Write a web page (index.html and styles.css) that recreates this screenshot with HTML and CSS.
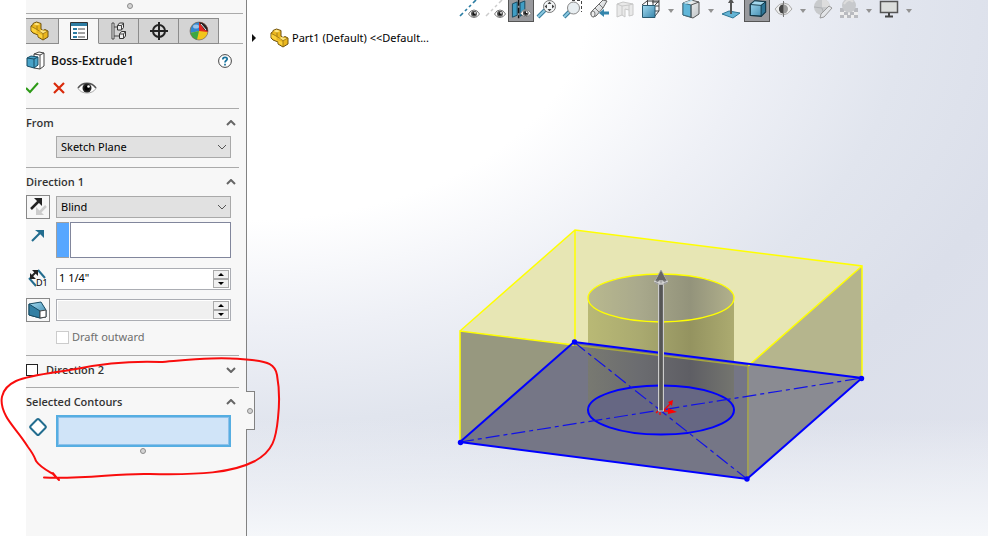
FILE: index.html
```
<!DOCTYPE html>
<html lang="en">
<head>
<meta charset="utf-8">
<title>Part1 - Boss-Extrude1</title>
<link rel="stylesheet" href="styles.css">
</head>
<body>
<svg class="defs" aria-hidden="true">
  <defs>
    <linearGradient id="gBlue" x1="0" y1="0" x2="1" y2="1"><stop offset="0" stop-color="#a5dcf2"/><stop offset="1" stop-color="#3784aa"/></linearGradient>
    <linearGradient id="gGray" x1="0" y1="0" x2="1" y2="1"><stop offset="0" stop-color="#fff"/><stop offset="1" stop-color="#bfc3c6"/></linearGradient>
    <linearGradient id="gCyl"><stop offset="0" stop-color="#b9b975"/><stop offset=".35" stop-color="#aaaa70"/><stop offset=".7" stop-color="#949360"/><stop offset="1" stop-color="#acab70"/></linearGradient>
    <linearGradient id="gCap"><stop offset="0" stop-color="#b9b98e"/><stop offset=".35" stop-color="#a9a98c"/><stop offset=".7" stop-color="#93937b"/><stop offset="1" stop-color="#b2b18c"/></linearGradient>
    <linearGradient id="gLow"><stop offset="0" stop-color="#787971"/><stop offset=".35" stop-color="#6b6c70"/><stop offset=".7" stop-color="#5e5e64"/><stop offset="1" stop-color="#74756f"/></linearGradient>
    <linearGradient id="gRod"><stop offset="0" stop-color="#777"/><stop offset=".5" stop-color="#4d4d4d"/><stop offset="1" stop-color="#777"/></linearGradient>
    <symbol id="eye" viewBox="0 0 20 12">
      <path d="M1 6.500Q4 2 10 2t9 4.500Q16 11 10 11T1 6.500Z" fill="#fff" stroke="#aaa" stroke-width="1"/>
      <path d="M1 6Q4 1.200 10 1.200T19 6" fill="none" stroke="#555" stroke-width="1.500"/>
      <circle cx="10" cy="6" r="4.500" fill="#222"/><circle cx="10" cy="6" r="2.600" fill="#000"/><circle cx="11.500" cy="4.500" r="1.300" fill="#fff"/>
    </symbol>
    <symbol id="eyeSmall" viewBox="0 0 12 9">
      <path d="M.5 5Q2.500 1 6 1t5.500 4Q9.500 8.500 6 8.500T.5 5Z" fill="#fff" stroke="#777"/>
      <circle cx="6" cy="4.700" r="3" fill="#555"/><circle cx="6" cy="4.700" r="1.500" fill="#111"/><circle cx="7" cy="3.800" r=".9" fill="#fff"/>
    </symbol>
    <symbol id="part" viewBox="0 0 20 20">
      <path d="m2 5 2-1.500V2.500L7.500 1 12 2.500V8l2 1.500L16 8.500l3 1.500v6l-5 3-5-3v-2L4 12 2 10Z" fill="#eab61e" stroke="#6f5310" stroke-linejoin="round"/>
      <path d="m4.500 3 3-1.300L11 3 8 4.500ZM9.500 10.500l3-1.500 5.500 1.500-4 2.200Z" fill="#ffe680"/>
      <path d="m2.500 6 5 2v4l6.500 2v4l-4.500-2.500v-2L4.500 11l-2-1.500Z" fill="#fbd23c"/>
      <path d="M8 4.500V8.500l6 4.200V18M2.500 5.500 8 8.500M14 12.700l4.500-2.500" fill="none" stroke="#94700f" stroke-width=".8"/>
    </symbol>
    <symbol id="chev" viewBox="0 0 10 6"><path d="m1 1 4 4 4-4" fill="none" stroke="currentColor"/></symbol>
    <symbol id="cube" viewBox="0 0 20 20">
      <path d="m2 6 5-4 12 1v11l-5 5-12-1Z" fill="url(#gBlue)" stroke="#123646" stroke-width="1.500" stroke-linejoin="round"/>
      <path d="m2 6 5-4 12 1-5 4Z" fill="#a4d8ed" stroke="#123646"/><path d="m14 7 5-4v11l-5 5Z" fill="#2d7596" stroke="#123646"/>
    </symbol>
    <symbol id="caret" viewBox="0 0 6 4"><path d="M0 0h6L3 4Z" fill="#929292"/></symbol>
  </defs>
</svg>

<main class="app">
  <aside class="panel">
    <div class="grip"><span class="dot"></span></div>
    <nav class="tabs" aria-label="Managers">
      <button class="tab tab-first" aria-label="Feature tree"><svg width="20" height="20"><use href="#part"/></svg></button>
      <button class="tab active" aria-label="Properties"><svg width="18" height="18" viewBox="0 0 18 18"><path d="M.5.500h17v17H.500z" fill="#fff" stroke="#333"/><path d="M1 1h16v3H1z" fill="#2e7da3"/><path d="M3 6h4v2H3zM3 10h4v2H3zM3 14h4v2H3z" fill="#2e7da3"/><path d="M8 7h7M8 11h7M8 15h7" stroke="#444"/></svg></button>
      <button class="tab" aria-label="Configurations"><svg width="16" height="18" viewBox="0 0 16 18"><path d="M1 1h2v16H1zM3 5h4M3 14h5" fill="#fff" stroke="#444"/><path d="M6.500 3.500 8.500 1h4v4.500l-2 2.500h-4ZM8.500 12l2-2.500h4V14l-2 2.500h-4Z" fill="#eee" stroke="#333"/><path d="M6.500 3.500h4V8M8.500 12h4v4.500M10.500 3.500l2-2.500M12.500 12l2-2.500" fill="none" stroke="#444"/></svg></button>
      <button class="tab" aria-label="Dimensions"><svg width="20" height="20" viewBox="0 0 20 20"><circle cx="10" cy="10" r="6" fill="none" stroke="#222" stroke-width="2"/><path d="M10 1v18M1 10h18" stroke="#222" stroke-width="2"/></svg></button>
      <button class="tab" aria-label="Display"><svg width="20" height="20" viewBox="0 0 20 20"><circle cx="10" cy="10" r="9" fill="#f2c51c"/><path d="M10 10V1a9 9 0 0 0-8.500 11Z" fill="#3286d0"/><path d="M10 10 1.500 12A9 9 0 0 0 8 18.800Z" fill="#3da844"/><path d="M10 10V1a9 9 0 0 1 8.900 10Z" fill="#e12722"/><path d="m10 1 2 .2a9 9 0 0 1 7 9l-4-2Z" fill="#222"/><path d="m12 3 5 6" stroke="#eee"/><ellipse cx="7" cy="5.500" rx="3" ry="2" fill="#fff" fill-opacity=".5"/><circle cx="10" cy="10" r="9" fill="none" stroke="#655" stroke-opacity=".6"/></svg></button>
    </nav>

    <header class="feature">
      <svg width="20" height="20" viewBox="0 0 20 20"><path d="m8 3 5-2 5 1v13l-4 3-6-1Z" fill="#fff" stroke="#444"/><path d="M14 4v14M8 3l6 1 4-2" fill="none" stroke="#444"/><path d="m1 7 4-2 7 1v8l-4 3-7-2Z" fill="#49a3c8" stroke="#174b63"/><path d="m1 7 7 1v9M8 8l4-2" fill="none" stroke="#174b63"/></svg>
      <h1>Boss-Extrude1</h1>
      <button class="bare" aria-label="Help"><svg width="14" height="14" viewBox="0 0 14 14"><circle cx="7" cy="7" r="6.400" fill="#fff" stroke="#444"/><path d="M4.800 5.500C4.800 2.500 9.400 2.700 9.200 5.200 9 6.600 7 6.600 7 8.500M7 9.800v1.600" fill="none" stroke="#16719c" stroke-width="1.700"/></svg></button>
    </header>
    <div class="actions">
      <button class="bare" aria-label="OK"><svg width="13" height="12" viewBox="0 0 13 12"><path d="m0 6 4 4 8-9" fill="none" stroke="#2c9a16" stroke-width="2"/></svg></button>
      <button class="bare" aria-label="Cancel"><svg width="12" height="12" viewBox="0 0 12 12"><path d="m1 1 10 10M11 1 1 11" stroke="#d92a0b" stroke-width="2.200"/></svg></button>
      <button class="bare" aria-label="Preview"><svg width="20" height="12"><use href="#eye"/></svg></button>
    </div>

    <section class="group">
      <h2>From <svg class="fold up"><use href="#chev"/></svg></h2>
      <div class="row">
        <div class="combo field"><select aria-label="Start condition"><option>Sketch Plane</option></select><svg><use href="#chev"/></svg></div>
      </div>
    </section>

    <section class="group direction">
      <h2>Direction 1 <svg class="fold up"><use href="#chev"/></svg></h2>
      <div class="row">
        <button class="tool" aria-label="Reverse direction"><svg width="20" height="20" viewBox="0 0 20 20"><path d="m18 9-6 6" stroke="#ccc" stroke-width="2.500"/><path d="M8 10v8h8l-3-3-2-2Z" fill="#ccc"/><path d="m3 12 8-8" stroke="#222" stroke-width="2.500"/><path d="M6 1h8v8l-3-3-2-2Z" fill="#222"/></svg></button>
        <div class="combo field"><select aria-label="End condition"><option>Blind</option></select><svg><use href="#chev"/></svg></div>
      </div>
      <div class="row">
        <svg class="mark arrow" width="14" height="14" viewBox="0 0 14 14"><path d="m1 13 9-9" stroke="#236d8f" stroke-width="2.200"/><path d="M4 2h9v8l-3-3-2-2Z" fill="#236d8f"/></svg>
        <div class="picker field"><span class="swatch"></span><input aria-label="Direction of extrusion"></div>
      </div>
      <div class="row depth">
        <svg class="mark" width="22" height="20" viewBox="0 0 22 20"><path d="m1 9 7 8M10 1l7 8" stroke="#236d8f" stroke-width="2"/><path d="m3 8 6-6" stroke="#222" stroke-width="2"/><path d="M2 4v6h6zM4 1h6v6z" fill="#222"/><text x="8" y="17" font-size="9">D1</text></svg>
        <div class="spin field"><input aria-label="Depth" value='1 1/4"'><span class="steps"><button aria-label="Increase"><svg viewBox="0 0 6 3"><path d="m3 0 3 3H0z"/></svg></button><button aria-label="Decrease"><svg viewBox="0 0 6 3"><path d="M0 0h6L3 3z"/></svg></button></span></div>
      </div>
      <div class="row draft">
        <button class="tool" aria-label="Draft"><svg width="20" height="18" viewBox="0 0 20 18"><path d="m1 3 12-2 5 8v7l-6 1-11-3Z" fill="url(#gBlue)" stroke="#174b63"/><path d="m1 3 11 7v7L1 14Z" fill="#327fa3" stroke="#174b63"/><path d="m12 10 6-1v7l-6 1Z" fill="#fff" stroke="#444"/></svg></button>
        <div class="spin off field"><input aria-label="Draft angle" disabled><span class="steps"><button aria-label="Increase"><svg viewBox="0 0 6 3"><path d="m3 0 3 3H0z"/></svg></button><button aria-label="Decrease"><svg viewBox="0 0 6 3"><path d="M0 0h6L3 3z"/></svg></button></span></div>
      </div>
      <label class="outward"><input type="checkbox" disabled>Draft outward</label>
    </section>

    <section class="group second">
      <h2><label><input type="checkbox">Direction 2</label> <svg class="fold"><use href="#chev"/></svg></h2>
    </section>

    <section class="group">
      <h2>Selected Contours <svg class="fold up"><use href="#chev"/></svg></h2>
      <div class="row">
        <svg class="mark contour" width="20" height="20" viewBox="0 0 20 20"><rect x="4" y="4" width="12" height="12" rx="1.500" transform="rotate(45 10 10)" fill="#fff" stroke="#236d8f" stroke-width="2"/></svg>
        <input class="contours field" aria-label="Selected contours">
      </div>
      <div class="resize"><span class="dot"></span></div>
    </section>
    <button class="handle" aria-label="Collapse panel"><span class="dot"></span></button>
  </aside>

  <section class="viewport">
    <svg class="scene" viewBox="247 0 741 536" role="img" aria-label="Extrude preview">
      <path d="m460 331 115-101 287 36v112L747 479 460 442Z" fill="#e7e6b4"/>
      <path d="m748 366 114-100v112L747 479Z" fill="#b5b58d"/>
      <path d="m460 331 288 35-1 113-287-37Z" fill="#97987f"/>
      <path d="m588 298h146v66l-146-19Z" fill="url(#gCyl)"/>
      <ellipse cx="661" cy="298" rx="73" ry="24" fill="url(#gCap)"/>
      <path d="m574 342 174 22-1 115-287-37Z" fill="#757686"/>
      <path d="m748 364 114 14-115 101Z" fill="#8a8b92"/>
      <path d="m588 345 146 19v46H588Z" fill="url(#gLow)"/>
      <path d="M460 331 575 230l287 36v112M862 266 748 366M575 230v112M460 442V331l114 14" fill="none" stroke="#ff0" stroke-width="1.500"/>
      <path d="m574 345 174 21v113" fill="none" stroke="#aaa83d" stroke-width="1.300"/>
      <ellipse cx="661" cy="298" rx="73" ry="24" fill="none" stroke="#ff0" stroke-width="1.300"/>
      <ellipse cx="661" cy="410" rx="73" ry="24.500" fill="#666783" stroke="#00f" stroke-width="2"/>
      <path d="M460 442 862 378M574 342l173 137" fill="none" stroke="#1111e8" stroke-width="1.200" stroke-dasharray="14 4 4 4"/>
      <path d="m574 342 288 36-115 101-287-37Z" fill="none" stroke="#00f" stroke-width="2"/>
      <g fill="#00f"><circle cx="574.500" cy="342" r="2.700"/><circle cx="861.500" cy="378.500" r="2.700"/><circle cx="747" cy="479" r="2.700"/><circle cx="460.500" cy="442.500" r="2.700"/></g>
      <path d="m663 411 8-8m-7 8h9m-15 0-2 2m4-1v3" stroke="red" stroke-width="1.300"/><path d="m673 400-1 6-4-4ZM668 408l9 4-9 2Z" fill="red"/>
      <path d="M658.500 282h5v129h-5Z" fill="url(#gRod)" stroke="#ccc"/>
      <path d="m661 270 6 11q1 3-4 3h-4q-5 0-4-3Z" fill="#777" stroke="#aaa"/><path d="m661 271 5 9h-10Z" fill="#666"/><path d="M654 281q7 4 14 0M659 281h4v3h-4z" fill="#888" stroke="#ddd"/>
    </svg>

    <div class="toolbar" role="toolbar" aria-label="View">
      <button aria-label="View sketch lines"><svg viewBox="0 0 26 22"><path d="m4 16 3-3m2-2 2-2m2-2 2-2m2-2 3-3" stroke="#2b7da3" stroke-width="1.700"/><svg x="12" y="9" width="12" height="9"><use href="#eyeSmall"/></svg></svg></button>
      <button aria-label="View axes"><svg viewBox="0 0 26 22"><path d="m4 16 3-3m2-2 2-2m2-2 2-2m2-2 3-3" stroke="#ccc" stroke-width="1.500"/><svg x="12" y="9" width="12" height="9"><use href="#eyeSmall"/></svg></svg></button>
      <button class="on" aria-label="View planes"><svg viewBox="0 0 26 22"><path d="m4 4 5-2v14l-5 2ZM12 3l5-2v13l-5 3Z" fill="#3f9dc4" stroke="#174b63"/><path d="M10.500 0v19" stroke="#111" stroke-width="1.500" stroke-dasharray="6 2"/><svg x="12" y="9" width="12" height="9"><use href="#eyeSmall"/></svg></svg></button>
      <button aria-label="Zoom to fit"><svg viewBox="0 0 26 22"><path d="m4 17 7-7" stroke="#387e9e" stroke-width="4"/><path d="m4 17 7-7" stroke="#8bc8e0" stroke-width="2"/><circle cx="15.500" cy="6.500" r="6" fill="#f4f6f7" stroke="#777"/><path d="m15.500 1.500 2 2.500h-4zM15.500 11.500l2-2.500h-4zM10.500 6.500 13 4.500v4zM20.500 6.500 18 4.500v4z" fill="#444"/></svg></button>
      <button aria-label="Zoom to area"><svg viewBox="0 0 26 22"><path d="M12 .500h9.500V12" fill="none" stroke="#444" stroke-dasharray="3 2"/><path d="m4 17 6-6" stroke="#387e9e" stroke-width="4"/><path d="m4 17 6-6" stroke="#8bc8e0" stroke-width="2"/><circle cx="13.500" cy="8" r="6" fill="#e8eef1" stroke="#888"/></svg></button>
      <button aria-label="Previous view"><svg viewBox="0 0 26 22"><path d="m5 12 5-5 7-7 4 1-4 7-7 8-3 1-2-2Z" fill="url(#gGray)" stroke="#666"/><path d="m9 8 4 4m0-8 4 4" stroke="#777"/><ellipse cx="7" cy="14" rx="2" ry="3" fill="#eee" stroke="#777"/><path d="m13 13 5-4v2.500h5v3h-5V17Z" fill="#3485ac"/></svg></button>
      <button aria-label="Section view"><svg viewBox="0 0 26 22"><path d="m5 4 6-2 10 2v11l-4 1v-6l-4-1v8l-3-2-5 2Z" fill="#e9e9e9" stroke="#c8c8c8"/><path d="m5 4 5 2 7-1 4-1M10 6v9M17 5v5" fill="none" stroke="#c8c8c8"/></svg></button>
      <button aria-label="View orientation"><svg viewBox="0 0 26 22"><path d="M9.500 0v11H21V0M4 5l5-4h12l-4 4M17 16l4-5M4 16l5-5M15 0v5m-1-3h7m-4 4h4" fill="none" stroke="#444"/><path d="M4.500 5.500H17v12H4.500Z" fill="url(#gBlue)" stroke="#285970"/></svg></button>
      <button class="drop" aria-label="View orientation options"><svg><use href="#caret"/></svg></button>
      <button aria-label="Display style"><svg viewBox="0 0 26 22"><path d="m5 3 8-3 8 2v12l-6 4-10-3Z" fill="url(#gGray)" stroke="#555"/><path d="m5 3 8 2v12l-8-2Z" fill="#60b6d9" stroke="#396f85"/><path d="m13 5 8-3M13 5v13" stroke="#555"/><path d="m5 3 8-3 2 .5L8 4Z" fill="#b7dfee"/></svg></button>
      <button class="drop" aria-label="Display style options"><svg><use href="#caret"/></svg></button>
      <button aria-label="Normal to"><svg viewBox="0 0 26 22"><path d="m4 14 7-3 11 2-7 5Z" fill="#65b4d5" stroke="#2d7695"/><path d="M13 1v13" stroke="#555" stroke-width="2"/><path d="m13-2 3 5h-6z" fill="#555"/></svg></button>
      <button class="on" aria-label="Shaded with edges"><svg viewBox="0 0 26 22"><svg x="4" y="-1" width="19" height="19" viewBox="0 0 20 20"><use href="#cube"/></svg></svg></button>
      <button aria-label="Hide or show items"><svg viewBox="0 0 26 22"><path d="M5 9q4-6 9-6t8 6q-4 6-9 6T5 9Z" fill="#eee" stroke="#aaa"/><circle cx="13.500" cy="9" r="4.500" fill="#999"/><path d="M13.500 4.500a4.500 4.500 0 0 0 0 9Z" fill="#444"/><path d="M13.500 1v16" stroke="#777"/></svg></button>
      <button class="drop" aria-label="Hide or show options"><svg><use href="#caret"/></svg></button>
      <button aria-label="Edit appearance"><svg viewBox="0 0 26 22"><circle cx="12" cy="7" r="8" fill="#c8cacc"/><path d="M12 7V-1a8 8 0 0 1 8 8Z" fill="#ddd"/><path d="m4 7 8 1 2 7" fill="none" stroke="#b0b2b5"/><path d="m11 14 8-8 3 2-8 9-4 1Z" fill="#e3e5e8" stroke="#999"/></svg></button>
      <button aria-label="Apply scene"><svg viewBox="0 0 26 22"><path d="M4 8h18v10H4Z" fill="#eee"/><path d="M4 8h4v4H4zM8 12h4v3H8zM4 15h4v3H4zM18 8h4v4h-4zM14 12h4v3h-4zM11 15h4v3h-4zM18 15h4v3h-4z" fill="#b9bbc0"/><circle cx="13" cy="5.500" r="7" fill="#c7c9cc"/><path d="M8 4q5-7 9-2" stroke="#ddd" fill="none" stroke-width="2"/></svg></button>
      <button class="drop" aria-label="Scene options"><svg><use href="#caret"/></svg></button>
      <button aria-label="View settings"><svg viewBox="0 0 26 22"><path d="M4.500 1.500h17v11h-17z" fill="#dcdedc" stroke="#555" stroke-width="1.500"/><path d="M13 13v3M9 16.500h8" stroke="#444" stroke-width="2"/></svg></button>
      <button class="drop" aria-label="View setting options"><svg><use href="#caret"/></svg></button>
    </div>
    <div class="tree">
      <svg width="4" height="8" viewBox="0 0 4 8"><path d="M0 0v8l4-4z" fill="#111"/></svg>
      <svg width="20" height="20"><use href="#part"/></svg>
      <span>Part1 (Default) &lt;&lt;Default...</span>
    </div>
  </section>
</main>

<svg class="ink" viewBox="0 0 290 140" aria-hidden="true"><path d="M44 127.500C90 129 115 123 150 124c50 1 82-1 105-13 18-10 21-22 23-43 2-18 1-32-1-43-2-11-9-13-25-15-33-4-65 0-92 2-28-1-55 1-84 7-24 4-47 6-60 12C-1 39-1 53 6 66c4 8 14 18 22 31 6 8 6 9 8 14 4 6 12 10 17 13l6 6M53 123l4 5"/></svg>
</body>
</html>
```
FILE: styles.css
```
* { box-sizing: border-box; }

body {
  margin: 0;
  background: #fff;
  color: #000;
  font: 11px/16px "Noto Sans", "Open Sans", sans-serif;
}

svg { display: block; flex: none; }
button, input, select { font: inherit; color: inherit; margin: 0; }
button { padding: 0; border: 0; background: none; }
.defs { position: absolute; width: 0; height: 0; }

.app { display: flex; min-height: 100vh; padding-left: 26px; }

/* Property panel */
.panel {
  position: relative;
  z-index: 1;
  flex: none;
  width: 221px;
  background: #f7f7f7;
  border-right: 1px solid #828282;
}

.dot {
  display: block;
  width: 6px;
  height: 6px;
  border: 1px solid #8b8b8b;
  border-radius: 50%;
  background: #d4d4d4;
}

.grip {
  display: flex;
  justify-content: center;
  height: 14px;
  margin-right: 3px;
  padding: 3px 9px 0 0;
  border-bottom: 1px solid #aaa;
}

.tabs {
  display: flex;
  height: 26px;
  margin: 4px 3px 0 0;
  border-bottom: 1px solid #aaa;
}

.tab {
  display: grid;
  place-items: center;
  width: 40px;
  height: 26px;
  border: 1px solid #8c8c8c;
  border-left: 0;
  background: #d4d4d4;
}

.tab-first { width: 33px; padding-right: 6px; }
.tab.active { background: #f7f7f7; border-bottom-color: #f7f7f7; }

.feature {
  display: flex;
  align-items: center;
  gap: 5px;
  height: 34px;
  padding-right: 14px;
}

h1, h2 {
  margin: 0;
  font-family: "Open Sans", "Noto Sans", sans-serif;
  font-weight: 600;
}

.feature h1 { flex: 1; font-size: 12px; color: #111; }

.actions {
  display: flex;
  align-items: center;
  gap: 14px;
  height: 20px;
  margin-bottom: 10px;
}

.actions .bare:last-child { margin-left: -2px; }

.group {
  margin-right: 7px;
  padding-bottom: 9px;
  border-top: 1px solid #aaa;
}

.group h2 {
  display: flex;
  align-items: center;
  justify-content: space-between;
  height: 27px;
  padding-right: 3px;
  font-size: 11px;
  color: #333;
}

.fold { width: 10px; height: 6px; color: #666; stroke-width: 2; }
.fold.up { transform: scaleY(-1); }

.row {
  display: grid;
  grid-template-columns: 30px minmax(0, 1fr);
  align-items: center;
  padding-right: 8px;
}

.field { grid-column: 2; width: 100%; }
.mark { margin-left: 2px; }

.tool {
  display: grid;
  place-items: center;
  width: 24px;
  height: 24px;
  border: 1px solid #888;
}

.combo {
  position: relative;
  display: flex;
  height: 22px;
}

.combo select {
  flex: 1;
  appearance: none;
  padding: 0 20px 0 4px;
  border: 1px solid #a9a9a9;
  border-radius: 0;
  background: #e1e1e1;
}

.combo svg {
  position: absolute;
  top: 8px;
  right: 4px;
  width: 10px;
  height: 6px;
  color: #555;
  pointer-events: none;
}

.picker { display: flex; gap: 1px; height: 36px; margin-top: 3px; }
.arrow { margin: 0 0 8px 5px; }
.swatch { width: 13px; border: 1px solid #a0a0a0; border-right: 0; background: #57a7ff; }
.picker input { flex: 1; min-width: 0; border: 1px solid #81869c; background: #fff; }

.depth { margin-top: 10px; }
.draft { margin-top: 8px; }

.spin {
  display: flex;
  height: 22px;
  padding: 1px;
  border: 1px solid #abadb3;
  background: #fff;
}

.spin > input {
  flex: 1;
  min-width: 0;
  padding: 0 0 2px 1px;
  border: 0;
  background: transparent;
}

.spin.off > input { background: #f0f0f0; }

.steps { display: grid; width: 16px; }
.steps button {
  display: grid;
  place-items: center;
  border: 1px solid #aaa;
  background: #f0f0f0;
}
.steps svg { width: 6px; height: 3px; }

.outward {
  display: flex;
  align-items: center;
  gap: 3px;
  height: 14px;
  margin: 8px 0 2px 30px;
  color: #6d6d6d;
}

input[type="checkbox"] {
  appearance: none;
  flex: none;
  width: 13px;
  height: 13px;
  border: 1px solid #ccc;
  background: #fff;
}

.second { padding-bottom: 4px; }
.second label { display: flex; align-items: center; gap: 8px; }
.second input[type="checkbox"] { width: 12px; height: 12px; border-color: #222; }

.contours {
  height: 32px;
  border: 2px solid #56aee2;
  outline: 1px solid #8dc1eb;
  outline-offset: -3px;
  background: #d0e4f8;
}
.contour { margin-bottom: 8px; }

.resize { display: flex; justify-content: center; padding: 1px 0 0 21px; }

.handle {
  position: absolute;
  left: 220px;
  top: 391px;
  display: grid;
  place-items: center;
  width: 9px;
  height: 39px;
  border: 1px solid #828282;
  border-left: 0;
  background: #f7f7f7;
}

/* Graphics area */
.viewport {
  position: relative;
  flex: 1;
  min-width: 0;
  background:
    linear-gradient(to bottom, transparent 78%, #f5f7fa 100%),
    radial-gradient(ellipse 620px 400px at 0 0, #fff 55%, #eef0f6 82%, #e1e5ee 106%, #dbdfea 130%, #e0e3ed 170%);
}

.scene { position: absolute; left: 0; top: 0; width: 741px; }

.toolbar {
  position: relative;
  display: flex;
  height: 22px;
  padding-left: 209px;
}

.toolbar button { flex: none; width: 26px; height: 22px; }
.toolbar button > svg { width: 26px; height: 22px; }
.toolbar .on { border: 1px solid #555; border-top: 0; background: #98999d; }
.toolbar .on > svg { margin-left: -1px; height: 21px; }
.toolbar .drop { display: grid; place-items: center; width: 14px; }
.toolbar .drop > svg { width: 6px; height: 4px; }

.tree {
  position: relative;
  display: flex;
  align-items: center;
  height: 32px;
  padding-left: 5px;
}
.tree svg + svg { margin: 0 3px 0 13px; }

/* Hand-drawn markup over the panel */
.ink {
  position: absolute;
  z-index: 2;
  left: 0;
  top: 350px;
  width: 290px;
  height: 140px;
  fill: none;
  stroke: #f90d0d;
  stroke-width: 2;
  stroke-linecap: round;
  pointer-events: none;
}
```
